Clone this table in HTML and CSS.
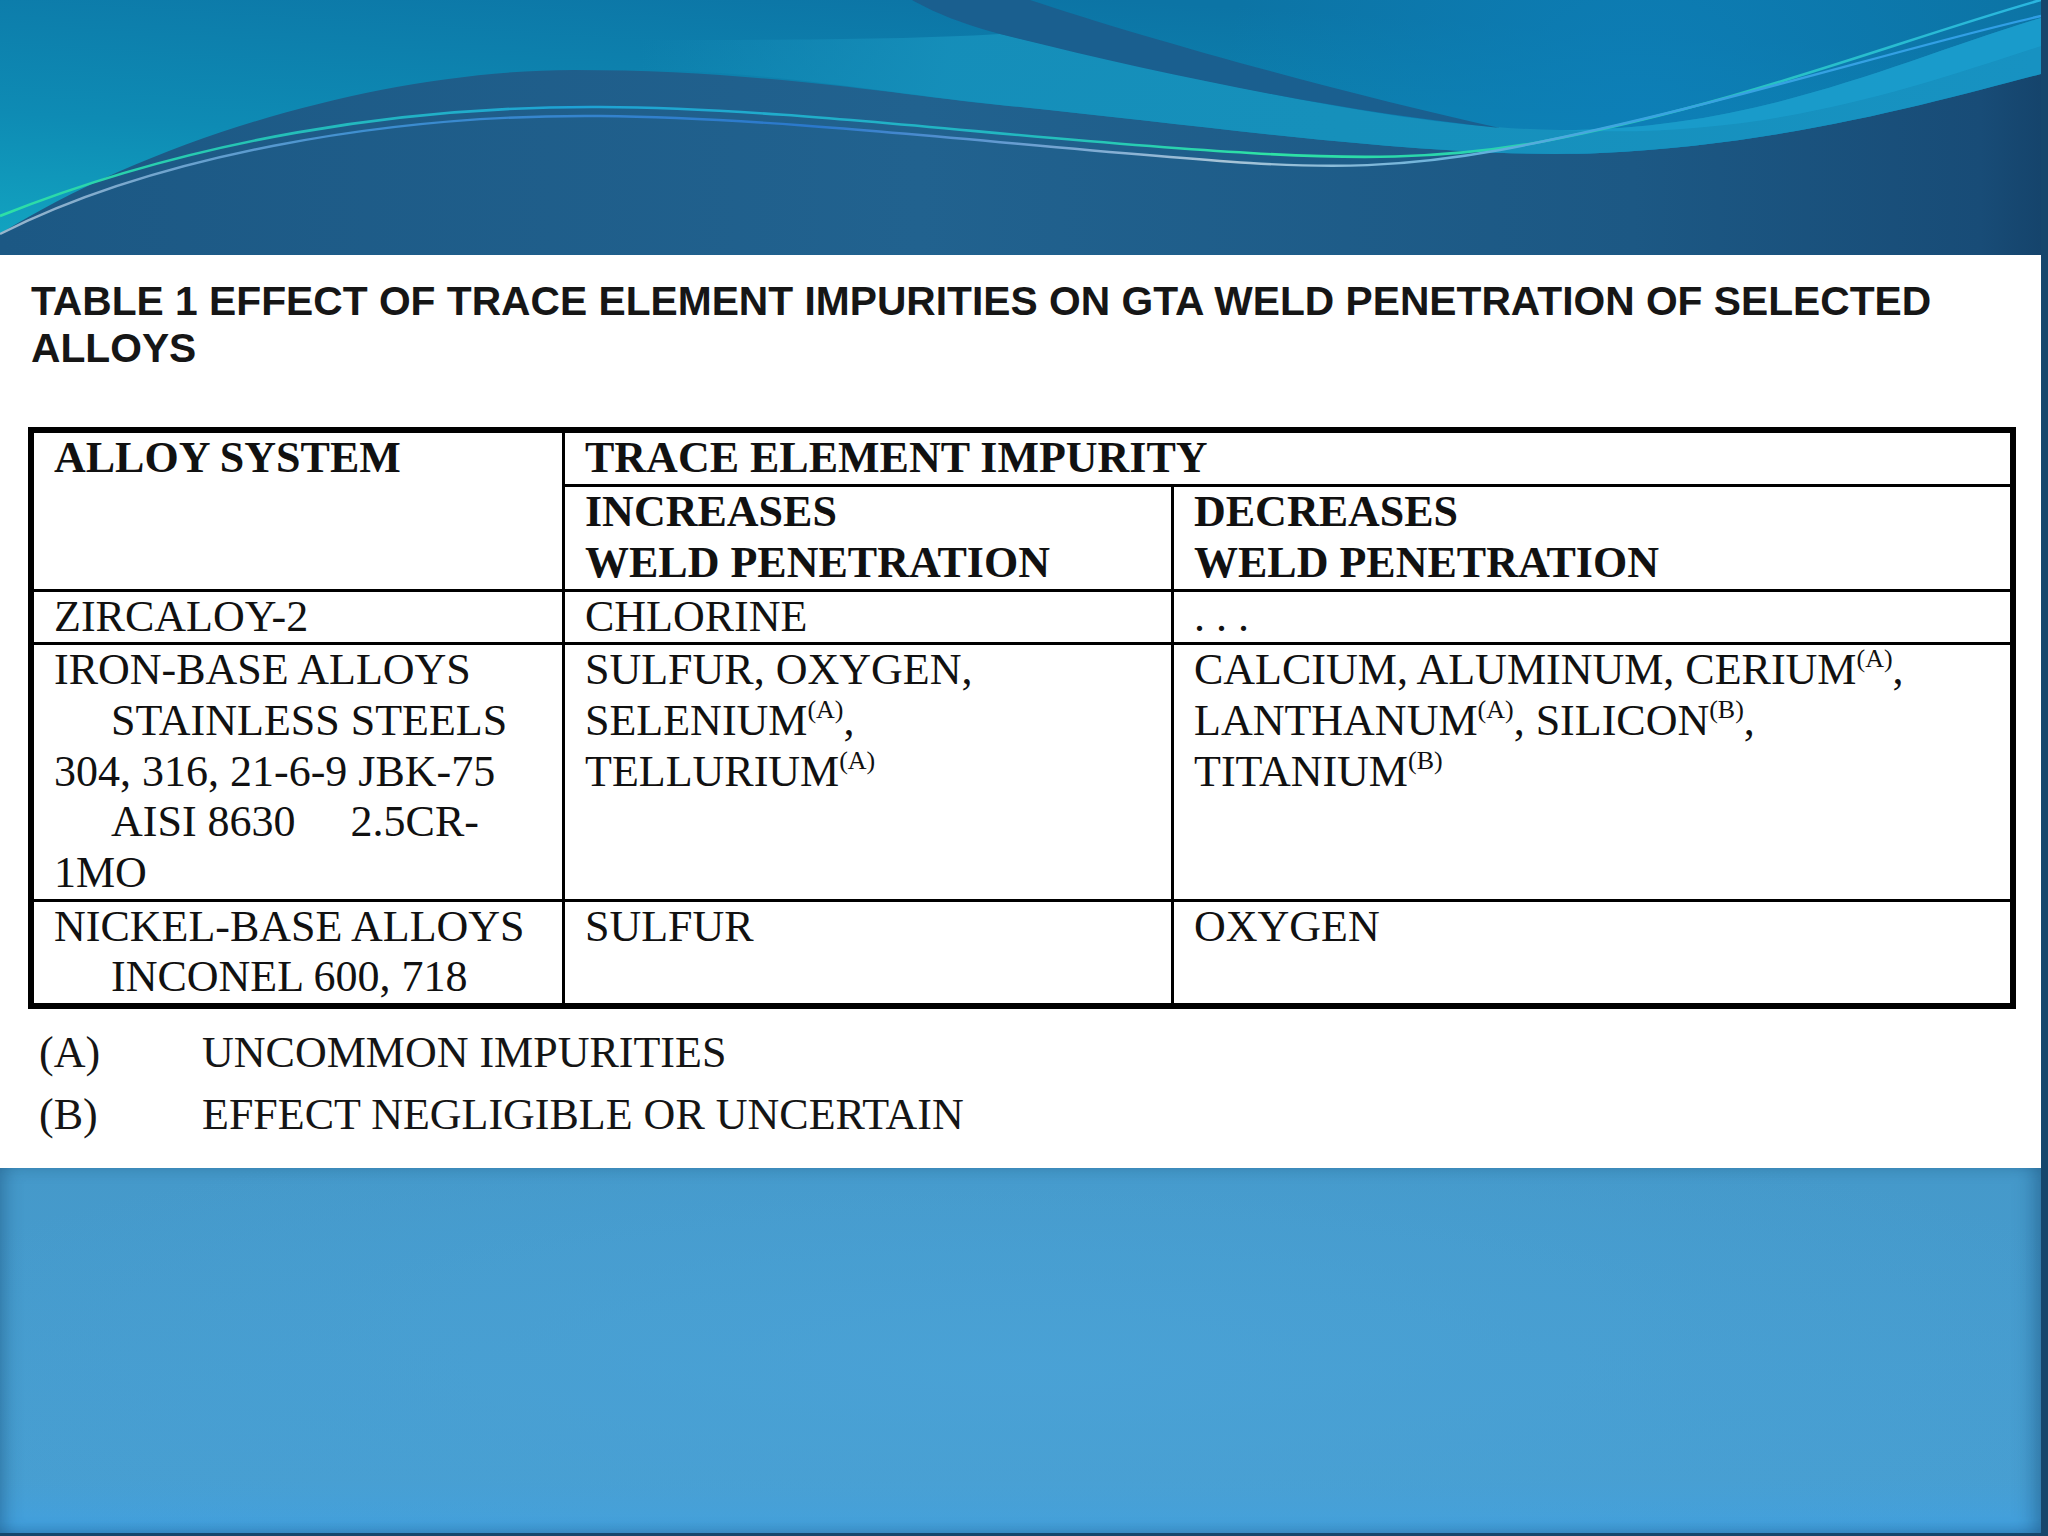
FILE: index.html
```html
<!DOCTYPE html>
<html lang="en">
<head>
<meta charset="utf-8">
<title>Table 1 – Effect of trace element impurities</title>
<link rel="stylesheet" href="styles.css">
</head>
<body>
<div class="slide">
  <header class="banner">
    <svg class="waves" viewBox="0 0 2041 255" width="2041" height="255" preserveAspectRatio="none" aria-hidden="true">
      <defs>
        <linearGradient id="base" x1="0" y1="0" x2="1" y2="0">
          <stop offset="0" stop-color="#1c5884"/>
          <stop offset="0.45" stop-color="#21628f"/>
          <stop offset="0.8" stop-color="#1c5884"/>
          <stop offset="0.97" stop-color="#184c77"/>
          <stop offset="1" stop-color="#15446c"/>
        </linearGradient>
        <linearGradient id="sky" x1="0" y1="1" x2="0.55" y2="0">
          <stop offset="0" stop-color="#12a3c0"/>
          <stop offset="0.4" stop-color="#0e8bb4"/>
          <stop offset="1" stop-color="#0c74a5"/>
        </linearGradient>
        <radialGradient id="glow" cx="1640" cy="120" r="420" gradientUnits="userSpaceOnUse">
          <stop offset="0" stop-color="#0d7fb8" stop-opacity="0.9"/>
          <stop offset="1" stop-color="#0d7fb8" stop-opacity="0"/>
        </radialGradient>
        <linearGradient id="cyan" x1="640" y1="0" x2="2041" y2="0" gradientUnits="userSpaceOnUse">
          <stop offset="0" stop-color="#1690bb" stop-opacity="0"/>
          <stop offset="0.22" stop-color="#1690bb" stop-opacity="0.9"/>
          <stop offset="0.5" stop-color="#1690bb"/>
          <stop offset="1" stop-color="#1792c2"/>
        </linearGradient>
        <linearGradient id="lineG" x1="0" y1="0" x2="2041" y2="0" gradientUnits="userSpaceOnUse">
          <stop offset="0" stop-color="#2ee0a6"/>
          <stop offset="0.12" stop-color="#25c4b4"/>
          <stop offset="0.28" stop-color="#1ea2d6"/>
          <stop offset="0.5" stop-color="#22b9c0"/>
          <stop offset="0.62" stop-color="#2ee3a4"/>
          <stop offset="0.8" stop-color="#26c8b6"/>
          <stop offset="1" stop-color="#2ab6e0"/>
        </linearGradient>
        <linearGradient id="lineW" x1="0" y1="0" x2="2041" y2="0" gradientUnits="userSpaceOnUse">
          <stop offset="0" stop-color="#9ab6cc"/>
          <stop offset="0.18" stop-color="#3d8ed0"/>
          <stop offset="0.4" stop-color="#2a78cc"/>
          <stop offset="0.6" stop-color="#a8c4d6"/>
          <stop offset="0.8" stop-color="#3aa4e0"/>
          <stop offset="1" stop-color="#2f9ee6"/>
        </linearGradient>
      </defs>
      <rect x="0" y="0" width="2041" height="255" fill="url(#base)"/>
      <path d="M0,234 C150,140 380,70 574,70 C760,70 900,95 1000,105 C1200,125 1440,160 1600,153 C1790,144 1940,100 2041,74 L2041,0 L0,0 Z" fill="url(#sky)"/>
      <path d="M0,234 C150,140 380,70 574,70 C760,70 900,95 1000,105 C1200,125 1440,160 1600,153 C1790,144 1940,100 2041,74 L2041,0 L0,0 Z" fill="url(#glow)"/>
      <path d="M640,40 C760,40 900,40 1000,34 C1200,80 1400,128 1560,130 C1760,130 1900,60 2041,18 L2041,74 C1940,100 1790,144 1600,153 C1440,160 1200,125 1000,105 C900,95 760,70 640,70 Z" fill="url(#cyan)"/>
      <path d="M1560,130 C1760,130 1900,60 2041,18 L2041,46 C1900,92 1760,140 1560,130 Z" fill="#1b9fce" opacity="0.7"/>
      <path d="M912,0 L1030,0 C1150,40 1350,95 1500,128 C1340,112 1150,72 1000,34 C955,22 930,10 912,0 Z" fill="#1a5f8f"/>
      <path d="M0,216 C190,140 400,106 600,107 C800,108 1020,140 1250,153 C1350,159 1440,160 1540,142 C1740,104 1900,40 2041,0" fill="none" stroke="url(#lineG)" stroke-width="2.6"/>
      <path d="M0,234 C150,158 380,114 600,116 C800,118 1050,150 1250,163 C1330,168 1400,168 1500,150 C1700,112 1900,48 2041,16" fill="none" stroke="url(#lineW)" stroke-width="2.4"/>
    </svg>
  </header>

  <main class="panel">
    <h1 class="title">TABLE 1 EFFECT OF TRACE ELEMENT IMPURITIES ON GTA WELD PENETRATION OF SELECTED<br>ALLOYS</h1>

    <table class="data">
      <colgroup>
        <col class="c1">
        <col class="c2">
        <col class="c3">
      </colgroup>
      <thead>
        <tr>
          <th rowspan="2" class="rb bb">ALLOY SYSTEM</th>
          <th colspan="2" class="bb">TRACE ELEMENT IMPURITY</th>
        </tr>
        <tr>
          <th class="rb bb">INCREASES<br>WELD PENETRATION</th>
          <th class="bb">DECREASES<br>WELD PENETRATION</th>
        </tr>
      </thead>
      <tbody>
        <tr>
          <td class="rb bb">ZIRCALOY-2</td>
          <td class="rb bb">CHLORINE</td>
          <td class="bb">. . .</td>
        </tr>
        <tr>
          <td class="rb bb">IRON-BASE ALLOYS<br><span class="ind">STAINLESS STEELS</span><br>304, 316, 21-6-9 JBK-75<br><span class="ind">AISI 8630<span class="tab"></span>2.5CR-</span><br>1MO</td>
          <td class="rb bb">SULFUR, OXYGEN,<br>SELENIUM<sup class="fn">(A)</sup>,<br>TELLURIUM<sup class="fn">(A)</sup></td>
          <td class="bb">CALCIUM, ALUMINUM, CERIUM<sup class="fn">(A)</sup>,<br>LANTHANUM<sup class="fn">(A)</sup>, SILICON<sup class="fn">(B)</sup>,<br>TITANIUM<sup class="fn">(B)</sup></td>
        </tr>
        <tr>
          <td class="rb">NICKEL-BASE ALLOYS<br><span class="ind">INCONEL 600, 718</span></td>
          <td class="rb">SULFUR</td>
          <td>OXYGEN</td>
        </tr>
      </tbody>
    </table>

    <div class="notes">
      <span class="mark">(A)</span><span class="note">UNCOMMON IMPURITIES</span>
      <span class="mark">(B)</span><span class="note">EFFECT NEGLIGIBLE OR UNCERTAIN</span>
    </div>
  </main>

  <footer class="base"></footer>
</div>
</body>
</html>
```

FILE: styles.css
```css
html, body {
  margin: 0;
  padding: 0;
}

body {
  width: 2048px;
  height: 1536px;
  overflow: hidden;
  background: #16466c;
}

.slide {
  width: 2041px;
  height: 1533px;
  display: flex;
  flex-direction: column;
}

.banner {
  height: 255px;
  flex: none;
}

.waves {
  display: block;
  width: 2041px;
  height: 255px;
}

.panel {
  flex: none;
  height: 913px;
  box-sizing: border-box;
  background: #ffffff;
  padding: 23px 0 0 28px;
  color: #111111;
}

.title {
  margin: 0 0 56px 3px;
  font-family: "Liberation Sans", Arial, sans-serif;
  font-weight: bold;
  font-size: 40.75px;
  line-height: 46.7px;
  color: #161616;
  white-space: nowrap;
}

.data {
  table-layout: fixed;
  width: 1988px;
  border: 6px solid #000;
  border-spacing: 0;
  font-family: "Liberation Serif", "Times New Roman", serif;
  font-size: 44px;
  line-height: 50.7px;
  color: #111;
}

.c1 { width: 531px; }
.c2 { width: 609px; }
.c3 { width: 836px; }

.data th,
.data td {
  padding: 0 20px;
  vertical-align: top;
  text-align: left;
  white-space: nowrap;
}

.data th {
  font-weight: bold;
}

.rb { border-right: 3px solid #000; }
.bb { border-bottom: 3px solid #000; }

.ind {
  display: inline-block;
  padding-left: 57px;
}

.tab {
  display: inline-block;
  width: 55px;
}

.fn {
  font-size: 26px;
  line-height: 0;
  vertical-align: 17px;
}

.notes {
  display: grid;
  grid-template-columns: 163px auto;
  margin: 13px 0 0 11px;
  font-family: "Liberation Serif", "Times New Roman", serif;
  font-size: 44px;
  line-height: 62px;
  color: #151515;
}

.base {
  flex: 1;
  background:
    radial-gradient(ellipse 60% 70% at 50% 55%, rgba(74, 162, 214, 0.9) 0%, rgba(74, 162, 214, 0) 100%),
    linear-gradient(180deg, #4599ca 0%, #479ed1 85%, #43a0dc 97%, #3d96d4 100%);
  box-shadow: inset 12px 0 18px -8px rgba(20, 70, 110, 0.45), inset -14px 0 20px -8px rgba(20, 70, 110, 0.5);
}
```
